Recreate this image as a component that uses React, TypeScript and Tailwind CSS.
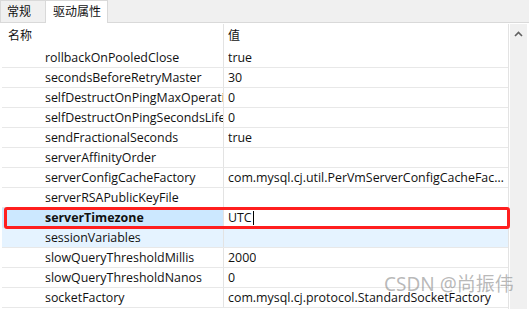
import React from "react";

type Prop = { name: string; value: string; state?: "selected" | "hover" };

const rows: Prop[] = [
  { name: "rollbackOnPooledClose", value: "true" },
  { name: "secondsBeforeRetryMaster", value: "30" },
  { name: "selfDestructOnPingMaxOperations", value: "0" },
  { name: "selfDestructOnPingSecondsLifetime", value: "0" },
  { name: "sendFractionalSeconds", value: "true" },
  { name: "serverAffinityOrder", value: "" },
  { name: "serverConfigCacheFactory", value: "com.mysql.cj.util.PerVmServerConfigCacheFactory" },
  { name: "serverRSAPublicKeyFile", value: "" },
  { name: "serverTimezone", value: "UTC", state: "selected" },
  { name: "sessionVariables", value: "", state: "hover" },
  { name: "slowQueryThresholdMillis", value: "2000" },
  { name: "slowQueryThresholdNanos", value: "0" },
  { name: "socketFactory", value: "com.mysql.cj.protocol.StandardSocketFactory" },
];

function Row({ row }: { row: Prop }) {
  const selected = row.state === "selected";
  const hover = row.state === "hover";
  return (
    <div className={`flex h-[20px] border-b border-[#e8e8e8] ${hover ? "bg-[#e5f3ff]" : ""}`}>
      <div
        className={`w-[222px] shrink-0 overflow-hidden whitespace-nowrap border-r border-[#e3e3e3] pl-[43px] leading-[19px] ${
          selected ? "bg-[#cce8ff] font-bold" : ""
        }`}
      >
        {row.name}
      </div>
      <div className="flex min-w-0 flex-1 items-center pl-[4px] leading-[19px]">
        <span className="truncate">{row.value}</span>
        {selected && <span className="ml-[1px] h-[14px] w-[1px] bg-black" />}
      </div>
    </div>
  );
}

export default function App() {
  return (
    <div
      className="relative h-[309px] w-[529px] overflow-hidden bg-[#f0f0f0] text-[12.4px] text-[#111]"
      style={{ fontFamily: '"Open Sans", "Noto Sans CJK SC", sans-serif' }}
    >
      <div className="flex h-[22px] items-end">
        <div className="flex h-[22px] w-[46px] items-center border border-b-0 border-[#d9d9d9] bg-[#f0f0f0] pl-[6px] text-[12px]">
          常规
        </div>
        <div className="relative z-10 -mb-[1px] flex h-[23px] w-[62px] items-center border border-b-0 border-l-0 border-[#d9d9d9] bg-white pl-[7px] text-[12px]">
          驱动属性
        </div>
      </div>

      <div className="flex h-[287px] border-t border-[#d9d9d9] bg-white pl-[2px] pt-[1px]">
        <div className="w-[507px] shrink-0 border-r border-[#e3e3e3]">
          <div className="flex h-[24px] items-center text-[12px]">
            <div className="w-[222px] shrink-0 self-stretch border-r border-[#e3e3e3] pl-[6px] leading-[24px]">名称</div>
            <div className="pl-[4px]">值</div>
          </div>
          {rows.map((r) => (
            <Row key={r.name} row={r} />
          ))}
        </div>
        <div className="ml-[1px] flex w-[17px] shrink-0 justify-center bg-[#f0f0f0] pt-[7px]">
          <svg width="9" height="6" viewBox="0 0 9 6" fill="none">
            <path d="M1 5L4.5 1.5L8 5" stroke="#606060" strokeWidth="1.6" />
          </svg>
        </div>
      </div>

      <div className="pointer-events-none absolute left-[4px] top-[207px] h-[22px] w-[506px] rounded-[3px] border-[3px] border-[#ff1f1f]" />

      <div
        className="pointer-events-none absolute left-[384px] top-[271px] text-[19px] leading-[26px] text-[#8a8a8a]/60"
        style={{ fontFamily: '"Noto Sans", "Noto Sans CJK SC", sans-serif' }}
      >
        CSDN @尚振伟
      </div>
    </div>
  );
}
